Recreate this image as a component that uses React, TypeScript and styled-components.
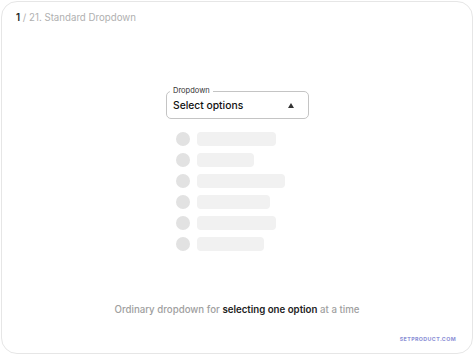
import React from "react";
import styled, { createGlobalStyle } from "styled-components";

const GlobalStyle = createGlobalStyle`
  html, body {
    margin: 0;
    padding: 0;
    background: #fff;
  }
  body {
    font-family: Inter, "Noto Sans", Arial, sans-serif;
  }
`;

const bars = [79, 57, 88, 73, 79, 67];

const App = () => {
  return (
    <>
      <GlobalStyle />
      <Frame>
        <Title>
          <strong>1</strong> / 21. Standard Dropdown
        </Title>
        <Center>
          <Field>
            <Legend>Dropdown</Legend>
            <Value>Select options</Value>
            <Caret />
          </Field>
          <List>
            {bars.map((w, i) => (
              <Row key={i}>
                <Dot />
                <Bar style={{ width: w }} />
              </Row>
            ))}
          </List>
        </Center>
        <Caption>
          Ordinary dropdown for <b>selecting one option</b> at a time
        </Caption>
        <Brand>SETPRODUCT.COM</Brand>
      </Frame>
    </>
  );
};

const Frame = styled.div`
  box-sizing: border-box;
  width: 472px;
  height: 353px;
  margin: 1px 0 0 1px;
  border: 1px solid #e6e6e6;
  border-radius: 16px;
  display: flex;
  flex-direction: column;
  padding: 9px 14px 0;
`;

const Title = styled.div`
  font-size: 9.7px;
  line-height: 13px;
  color: #b0b0b0;
  strong {
    color: #222;
    font-weight: 600;
  }
`;

const Center = styled.div`
  display: flex;
  flex-direction: column;
  align-items: center;
  margin-top: 67px;
`;

const Field = styled.div`
  position: relative;
  box-sizing: border-box;
  width: 143px;
  height: 28px;
  border: 1px solid #c4c4c4;
  border-radius: 5px;
  display: flex;
  align-items: center;
  padding: 0 14px 0 6px;
  margin-left: 1px;
`;

const Legend = styled.span`
  position: absolute;
  left: 3px;
  top: -7px;
  padding: 0 3px;
  background: #fff;
  font-size: 7.5px;
  line-height: 11px;
  color: #333;
`;

const Value = styled.span`
  flex: 1;
  font-size: 10.3px;
  font-weight: 500;
  color: #111;
`;

const Caret = styled.span`
  width: 0;
  height: 0;
  border-left: 3.5px solid transparent;
  border-right: 3.5px solid transparent;
  border-bottom: 5px solid #333;
`;

const List = styled.div`
  display: flex;
  flex-direction: column;
  gap: 7px;
  margin-top: 13px;
  width: 124px;
  margin-left: 1px;
`;

const Row = styled.div`
  display: flex;
  align-items: center;
  gap: 7px;
`;

const Dot = styled.span`
  width: 14px;
  height: 14px;
  border-radius: 50%;
  background: #e2e2e2;
`;

const Bar = styled.span`
  height: 14px;
  border-radius: 4px;
  background: #f1f1f1;
`;

const Caption = styled.div`
  margin-top: 53px;
  text-align: center;
  font-size: 9.7px;
  color: #a0a0a0;
  font-weight: 500;
  b {
    color: #222;
    font-weight: 600;
  }
`;

const Brand = styled.div`
  align-self: flex-end;
  margin-top: 21px;
  margin-right: 2px;
  font-size: 5.3px;
  font-weight: 700;
  letter-spacing: 0.4px;
  color: #8c8fd6;
`;

export default App;
